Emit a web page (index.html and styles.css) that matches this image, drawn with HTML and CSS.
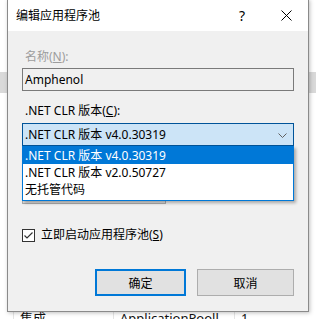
FILE: index.html
```html
<!DOCTYPE html>
<html lang="zh-CN">
<head>
  <meta charset="UTF-8">
  <title>编辑应用程序池</title>
  <link rel="stylesheet" href="styles.css">
</head>
<body>
  <div class="screen">
    <div class="backdrop">
      <div class="bg-row selected"></div>
      <div class="bg-row last">
        <span class="cell c1">集成</span>
        <span class="cell c2">ApplicationPooll...</span>
        <span class="cell c3">1</span>
      </div>
    </div>

    <div class="dialog">
      <div class="titlebar">
        <span class="title">编辑应用程序池</span>
        <span class="help">?</span>
        <span class="close">
          <svg viewBox="0 0 11 11" width="11" height="11"><path d="M0.5 0.5L10.5 10.5M10.5 0.5L0.5 10.5" stroke="#000" stroke-width="1" fill="none"/></svg>
        </span>
      </div>

      <div class="content">
        <div class="label disabled">名称(<u>N</u>):</div>
        <div class="textbox">Amphenol</div>

        <div class="label clr-label">.NET CLR 版本(<u>C</u>):</div>
        <div class="combo-wrap">
          <div class="combo open">
            <span>.NET CLR 版本 v4.0.30319</span>
            <svg class="chevron" viewBox="0 0 9 5" width="9" height="5"><path d="M0.5 0.5L4.5 4.5L8.5 0.5" stroke="#606060" stroke-width="1" fill="none"/></svg>
          </div>
          <ul class="combo-list">
            <li class="active">.NET CLR 版本 v4.0.30319</li>
            <li>.NET CLR 版本 v2.0.50727</li>
            <li>无托管代码</li>
          </ul>
        </div>

        <div class="combo pipeline"></div>

        <label class="check-row">
          <span class="checkbox">
            <svg viewBox="0 0 13 13" width="13" height="13"><path d="M2.5 6.5L5 9L10.5 3.5" stroke="#333" stroke-width="1.2" fill="none"/></svg>
          </span>
          <span>立即启动应用程序池(<u>S</u>)</span>
        </label>

        <div class="buttons">
          <button class="btn default">确定</button>
          <button class="btn cancel">取消</button>
        </div>
      </div>
    </div>
  </div>
</body>
</html>
```

FILE: styles.css
```css
html, body {
  margin: 0;
  padding: 0;
}
body {
  font-family: "Noto Sans", "Noto Sans CJK SC", sans-serif;
  font-size: 12px;
  color: #000;
  background: #fff;
}
.screen {
  position: relative;
  width: 316px;
  height: 319px;
  overflow: hidden;
}
.backdrop {
  display: flex;
  flex-direction: column;
  height: 100%;
  background: #fff;
}
.bg-row.selected {
  margin-top: 72px;
  height: 21px;
  background: #d9d9d9;
}
.bg-row.last {
  margin-top: auto;
  height: 9px;
  display: flex;
  align-items: flex-start;
  font-size: 13px;
  line-height: 16px;
  overflow: hidden;
  color: #111;
}
.cell {
  height: 20px;
  border-left: 1px solid #e5e5e5;
  padding-left: 6px;
}
.c1 { margin-left: 13px; width: 93px; }
.c2 { width: 114px; }
.c3 { width: 40px; }

.dialog {
  position: absolute;
  left: 7px;
  top: -1px;
  width: 302px;
  height: 313px;
  box-sizing: border-box;
  border: 1px solid #8a8a8a;
  background: #f0f0f0;
  box-shadow: 1px 1px 4px rgba(0, 0, 0, 0.25);
}
.titlebar {
  height: 31px;
  background: #fff;
  display: flex;
  align-items: center;
  padding-left: 8px;
}
.title {
  flex: 1;
  font-size: 12px;
  line-height: 16px;
}
.help {
  width: 12px;
  margin-right: 33px;
  font-size: 14px;
  text-align: center;
}
.close {
  display: flex;
  margin-right: 16px;
}

.content {
  padding: 0 14px;
  display: flex;
  flex-direction: column;
}
.label {
  line-height: 16px;
  margin-top: 18px;
  margin-bottom: 3px;
  padding-left: 3px;
}
.label.disabled {
  color: #9d9d9d;
}
.label.clr-label {
  margin-top: 12px;
  margin-bottom: 4px;
}
.textbox {
  height: 23px;
  box-sizing: border-box;
  border: 1px solid #7a7a7a;
  padding: 0 2px;
  line-height: 21px;
}
.combo-wrap {
  position: relative;
}
.combo {
  height: 23px;
  box-sizing: border-box;
  border: 1px solid #adadad;
  background: #e5e5e5;
  padding: 0 2px;
  line-height: 21px;
  display: flex;
  align-items: center;
}
.combo span {
  flex: 1;
}
.combo.open {
  background: #cce4f7;
  border-color: #005499;
}
.chevron {
  margin-right: 4px;
  margin-top: 2px;
}
.combo-list {
  position: absolute;
  left: 0;
  right: 0;
  top: 23px;
  margin: 0;
  padding: 0;
  list-style: none;
  background: #fff;
  border: 1px solid #0078d7;
  box-shadow: 2px 2px 3px rgba(0, 0, 0, 0.3);
  z-index: 2;
  padding-bottom: 2px;
}
.combo-list li {
  height: 17px;
  line-height: 17px;
  padding-left: 2px;
}
.combo-list li.active {
  background: #0078d7;
  color: #fff;
}
.combo.pipeline {
  margin-top: 35px;
  width: 144px;
  background: #e1e1e1;
}

.check-row {
  margin-top: 23px;
  display: flex;
  align-items: center;
  gap: 6px;
  line-height: 16px;
}
.checkbox {
  width: 13px;
  height: 13px;
  box-sizing: border-box;
  border: 1px solid #333;
  background: #fff;
  display: flex;
}
.checkbox svg {
  margin: -1px;
}

.buttons {
  margin-top: 26px;
  display: flex;
  justify-content: flex-end;
  gap: 11px;
}
.btn {
  height: 27px;
  box-sizing: border-box;
  background: #e1e1e1;
  border: 1px solid #adadad;
  font-family: inherit;
  font-size: 12px;
  color: #000;
  padding: 0;
}
.btn.default {
  width: 91px;
  border: 2px solid #0078d7;
}
.btn.cancel {
  width: 97px;
}
```
